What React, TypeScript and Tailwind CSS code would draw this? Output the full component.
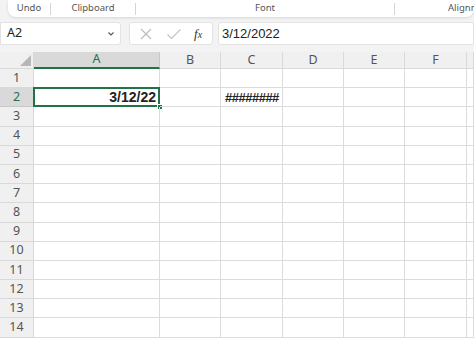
import React from "react";

const cols = ["A", "B", "C", "D", "E", "F", ""];
const rows = Array.from({ length: 14 }, (_, i) => i + 1);

function Chevron() {
  return (
    <svg width="8" height="6" viewBox="0 0 8 6" className="text-[#555]">
      <path d="M1.5 1.5 L4 4 L6.5 1.5" fill="none" stroke="currentColor" strokeWidth="1.1" />
    </svg>
  );
}

export default function App() {
  return (
    <div className="w-[474px] h-[338px] overflow-hidden bg-[#f3f3f3] font-['Noto_Sans',sans-serif]">
      {/* ribbon group labels */}
      <div className="h-[17px] pl-[8px]">
        <div className="h-full flex items-center bg-white rounded-b-[8px] shadow-[0_1px_3px_rgba(0,0,0,0.12)] text-[9.5px] text-[#555] overflow-hidden">
          <div className="w-[42px] shrink-0 text-center">Undo</div>
          <div className="w-px h-[12px] shrink-0 bg-[#d4d4d4]" />
          <div className="w-[84px] shrink-0 text-center">Clipboard</div>
          <div className="w-px h-[12px] shrink-0 bg-[#d4d4d4]" />
          <div className="w-[258px] shrink-0 text-center">Font</div>
          <div className="w-px h-[12px] shrink-0 bg-[#d4d4d4]" />
          <div className="flex-1 min-w-0 pl-[53px] whitespace-nowrap overflow-hidden">Alignment</div>
        </div>
      </div>

      {/* formula bar */}
      <div className="mt-[5px] h-[23px] flex gap-[8px]">
        <div className="w-[121px] shrink-0 bg-white border border-[#e3e3e3] rounded-r-[3px] flex items-center justify-between pl-[6px] pr-[5px] text-[12.5px] text-[#222]">
          <span>A2</span>
          <Chevron />
        </div>
        <div className="w-[84px] shrink-0 bg-white border border-[#e3e3e3] rounded-[3px] flex items-center">
          <svg width="14" height="14" viewBox="0 0 14 14" className="ml-[9px]">
            <path d="M2 2 L12 12 M12 2 L2 12" stroke="#bdbdbd" strokeWidth="1.2" />
          </svg>
          <svg width="16" height="14" viewBox="0 0 16 14" className="ml-[13px]">
            <path d="M1.5 7.5 L5.5 11.5 L14.5 2.5" fill="none" stroke="#c4c4c4" strokeWidth="1.2" />
          </svg>
          <span className="ml-[12px] text-[13px] italic text-[#333] font-['Liberation_Serif',serif]">
            f<span className="text-[10px]">x</span>
          </span>
        </div>
        <div className="flex-1 -ml-[3px] bg-white border border-[#e3e3e3] rounded-l-[3px] flex items-center pl-[3px] text-[13px] text-[#222] font-['Liberation_Sans',sans-serif]">
          3/12/2022
        </div>
      </div>

      {/* grid */}
      <div className="mt-[7px] grid grid-cols-[34px_126px_61px_62px_61px_61px_62px_1fr] grid-rows-[17px] auto-rows-[19.2px] bg-white text-[12.5px] text-[#555]">
        <div className="relative bg-[#f0f0f0] border-r border-b border-[#d9d9d9]">
          <div className="absolute right-[2px] bottom-[2px] w-0 h-0 border-l-[11px] border-l-transparent border-b-[11px] border-b-[#b7b7b7]" />
        </div>
        {cols.map((c, i) =>
          i === 0 ? (
            <div
              key={c}
              className="bg-[#d9d9d9] border-r border-[#c8c8c8] border-b-2 border-b-[#217346] flex items-center justify-center text-[#217346]"
            >
              {c}
            </div>
          ) : (
            <div key={i} className="bg-[#f0f0f0] border-r border-b border-[#d9d9d9] flex items-center justify-center">
              {c}
            </div>
          )
        )}
        {rows.map((r) => (
          <React.Fragment key={r}>
            <div
              className={
                r === 2
                  ? "bg-[#d9d9d9] border-r border-b border-[#c8c8c8] flex items-center justify-center text-[#217346]"
                  : "bg-[#f0f0f0] border-r border-b border-[#d9d9d9] flex items-center justify-center"
              }
            >
              {r}
            </div>
            {cols.map((c, i) => (
              <div key={i} className="relative border-r border-b border-[#dcdcdc] flex items-center text-[14px] text-[#222] font-['Liberation_Sans',sans-serif]">
                {r === 2 && i === 0 && (
                  <>
                    <div className="absolute -left-px -top-px -right-px -bottom-px border-2 border-[#217346]" />
                    <div className="absolute -right-[4px] -bottom-[4px] w-[6px] h-[6px] bg-[#217346] border border-white" />
                    <span className="ml-auto pr-[3px] font-bold">3/12/22</span>
                  </>
                )}
                {r === 2 && i === 2 && <span className="pl-[4px] font-bold text-[13px] tracking-[-0.5px]">########</span>}
              </div>
            ))}
          </React.Fragment>
        ))}
      </div>
    </div>
  );
}
